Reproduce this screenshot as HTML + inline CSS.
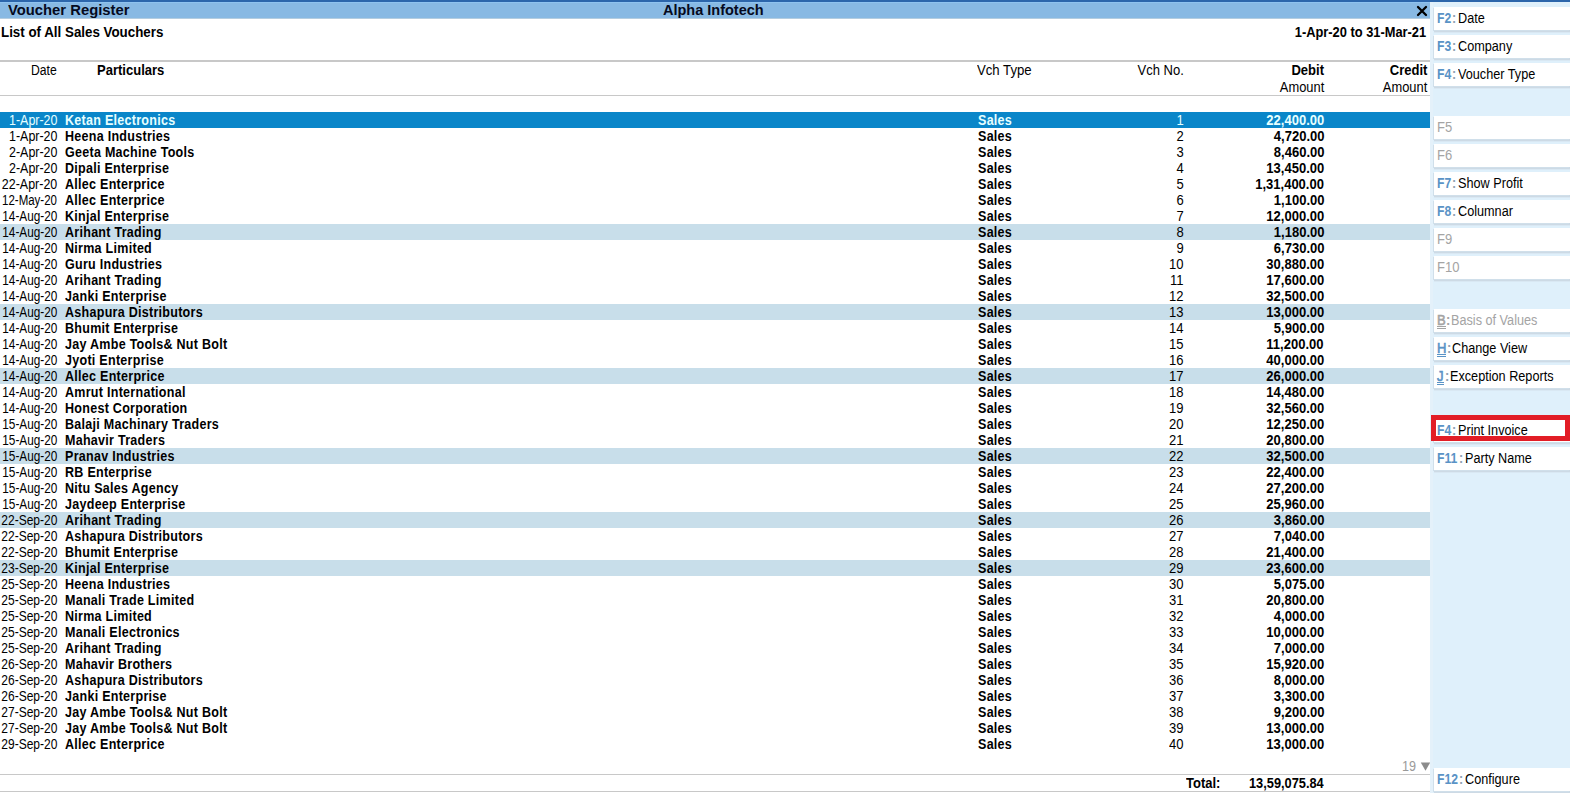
<!DOCTYPE html><html><head><meta charset="utf-8"><title>Voucher Register</title><style>
*{margin:0;padding:0;box-sizing:border-box}
html,body{width:1570px;height:793px;overflow:hidden;background:#fff}
body{position:relative;font-family:"Liberation Sans",sans-serif;font-size:13px;color:#000}
.a{position:absolute;white-space:nowrap;line-height:16px}
.b{font-weight:bold}
.r{text-align:right}
.n{font-size:13.5px}
#topstrip{position:absolute;left:0;top:0;width:1570px;height:2px;background:#2c66ab}
#title{position:absolute;left:0;top:2px;width:1430px;height:16px;background:#88b9e3;border-top:1px solid #8fc3ef}
#title2{position:absolute;left:0;top:18px;width:1430px;height:1px;background:#b4cde0}
#panel{position:absolute;left:1430px;top:2px;width:140px;height:791px;background:#dff0fb}
#panel .strip{position:absolute;left:0;top:0;width:3px;height:791px;background:#e4f1fa}
.btn{position:absolute;left:1434px;width:136px;height:23px;background:#fff;box-shadow:-1px 1px 0 #d0dfea,0 2px 0 #cddae5,0 3px 0 #d9e8f3}
.btn .t{position:absolute;left:3px;top:4px;line-height:16px;white-space:nowrap;font-size:13px}
.btn .k{color:#5f97c8;font-weight:bold}
.btn.dis .t{color:#a6a6a6}
.lb{margin-left:1.5px}
.row{position:absolute;left:0;width:1430px;height:16px}
.sel{background:#0a86c9;color:#e6ffff}
.lt{background:#c8deea}
.hl{position:absolute;left:0;width:1430px;background:#c4c4c4}
</style></head><body>
<div id="topstrip"></div><div id="title"></div><div id="title2"></div>
<div style="position:absolute;white-space:nowrap;top:2px;font-size:14px;line-height:16px;left:7.5px;font-weight:bold;transform:scaleX(1.057);transform-origin:0 0;color:#050a20;">Voucher Register</div>
<div style="position:absolute;white-space:nowrap;top:2px;font-size:14px;line-height:16px;left:662.5px;font-weight:bold;transform:scaleX(1.035);transform-origin:0 0;color:#050a20;">Alpha Infotech</div>
<svg style="position:absolute;left:1416px;top:5px" width="12" height="12" viewBox="0 0 12 12"><path d="M2 2L10 10M10 2L2 10" stroke="#000" stroke-width="2.3" stroke-linecap="round"/></svg>
<div style="position:absolute;white-space:nowrap;top:24px;font-size:14px;line-height:16px;left:1.2px;font-weight:bold;transform:scaleX(0.953);transform-origin:0 0;">List of All Sales Vouchers</div>
<div style="position:absolute;white-space:nowrap;top:24px;font-size:14px;line-height:16px;right:143.4000000000001px;font-weight:bold;transform:scaleX(0.918);transform-origin:100% 0;">1-Apr-20 to 31-Mar-21</div>
<div class="hl" style="top:60px;height:2px;background:#c8c8c8"></div>
<div class="hl" style="top:95px;height:1px;background:#c8c8c8"></div>
<div style="position:absolute;white-space:nowrap;top:62px;font-size:14px;line-height:16px;left:31px;transform:scaleX(0.87);transform-origin:0 0;">Date</div>
<div style="position:absolute;white-space:nowrap;top:62px;font-size:14px;line-height:16px;left:97px;font-weight:bold;transform:scaleX(0.93);transform-origin:0 0;">Particulars</div>
<div style="position:absolute;white-space:nowrap;top:62px;font-size:14px;line-height:16px;left:977px;transform:scaleX(0.94);transform-origin:0 0;">Vch Type</div>
<div style="position:absolute;white-space:nowrap;top:62px;font-size:14px;line-height:16px;right:386px;transform:scaleX(0.93);transform-origin:100% 0;">Vch No.</div>
<div style="position:absolute;white-space:nowrap;top:62px;font-size:14px;line-height:16px;right:246px;font-weight:bold;transform:scaleX(0.93);transform-origin:100% 0;">Debit</div>
<div style="position:absolute;white-space:nowrap;top:79px;font-size:14px;line-height:16px;right:246px;transform:scaleX(0.92);transform-origin:100% 0;">Amount</div>
<div style="position:absolute;white-space:nowrap;top:62px;font-size:14px;line-height:16px;right:143px;font-weight:bold;transform:scaleX(0.93);transform-origin:100% 0;">Credit</div>
<div style="position:absolute;white-space:nowrap;top:79px;font-size:14px;line-height:16px;right:143px;transform:scaleX(0.92);transform-origin:100% 0;">Amount</div>
<div class="row sel" style="top:112px"></div>
<div style="position:absolute;white-space:nowrap;top:112px;font-size:14px;line-height:16px;right:1513px;transform:scaleX(0.89);transform-origin:100% 0;color:#e6ffff;">1-Apr-20</div>
<div style="position:absolute;white-space:nowrap;top:112px;font-size:14px;line-height:16px;left:65px;font-weight:bold;transform:scaleX(0.895);transform-origin:0 0;color:#e6ffff;letter-spacing:0.3px;">Ketan Electronics</div>
<div style="position:absolute;white-space:nowrap;top:112px;font-size:14px;line-height:16px;left:978px;font-weight:bold;transform:scaleX(0.895);transform-origin:0 0;color:#e6ffff;letter-spacing:0.3px;">Sales</div>
<div style="position:absolute;white-space:nowrap;top:112px;font-size:14px;line-height:16px;right:386px;transform:scaleX(0.93);transform-origin:100% 0;color:#e6ffff;">1</div>
<div style="position:absolute;white-space:nowrap;top:112px;font-size:14px;line-height:16px;right:246px;font-weight:bold;transform:scaleX(0.93);transform-origin:100% 0;color:#e6ffff;">22,400.00</div>
<div class="row" style="top:128px"></div>
<div style="position:absolute;white-space:nowrap;top:128px;font-size:14px;line-height:16px;right:1513px;transform:scaleX(0.89);transform-origin:100% 0;">1-Apr-20</div>
<div style="position:absolute;white-space:nowrap;top:128px;font-size:14px;line-height:16px;left:65px;font-weight:bold;transform:scaleX(0.895);transform-origin:0 0;letter-spacing:0.3px;">Heena Industries</div>
<div style="position:absolute;white-space:nowrap;top:128px;font-size:14px;line-height:16px;left:978px;font-weight:bold;transform:scaleX(0.895);transform-origin:0 0;letter-spacing:0.3px;">Sales</div>
<div style="position:absolute;white-space:nowrap;top:128px;font-size:14px;line-height:16px;right:386px;transform:scaleX(0.93);transform-origin:100% 0;">2</div>
<div style="position:absolute;white-space:nowrap;top:128px;font-size:14px;line-height:16px;right:246px;font-weight:bold;transform:scaleX(0.93);transform-origin:100% 0;">4,720.00</div>
<div class="row" style="top:144px"></div>
<div style="position:absolute;white-space:nowrap;top:144px;font-size:14px;line-height:16px;right:1513px;transform:scaleX(0.89);transform-origin:100% 0;">2-Apr-20</div>
<div style="position:absolute;white-space:nowrap;top:144px;font-size:14px;line-height:16px;left:65px;font-weight:bold;transform:scaleX(0.895);transform-origin:0 0;letter-spacing:0.3px;">Geeta Machine Tools</div>
<div style="position:absolute;white-space:nowrap;top:144px;font-size:14px;line-height:16px;left:978px;font-weight:bold;transform:scaleX(0.895);transform-origin:0 0;letter-spacing:0.3px;">Sales</div>
<div style="position:absolute;white-space:nowrap;top:144px;font-size:14px;line-height:16px;right:386px;transform:scaleX(0.93);transform-origin:100% 0;">3</div>
<div style="position:absolute;white-space:nowrap;top:144px;font-size:14px;line-height:16px;right:246px;font-weight:bold;transform:scaleX(0.93);transform-origin:100% 0;">8,460.00</div>
<div class="row" style="top:160px"></div>
<div style="position:absolute;white-space:nowrap;top:160px;font-size:14px;line-height:16px;right:1513px;transform:scaleX(0.89);transform-origin:100% 0;">2-Apr-20</div>
<div style="position:absolute;white-space:nowrap;top:160px;font-size:14px;line-height:16px;left:65px;font-weight:bold;transform:scaleX(0.895);transform-origin:0 0;letter-spacing:0.3px;">Dipali Enterprise</div>
<div style="position:absolute;white-space:nowrap;top:160px;font-size:14px;line-height:16px;left:978px;font-weight:bold;transform:scaleX(0.895);transform-origin:0 0;letter-spacing:0.3px;">Sales</div>
<div style="position:absolute;white-space:nowrap;top:160px;font-size:14px;line-height:16px;right:386px;transform:scaleX(0.93);transform-origin:100% 0;">4</div>
<div style="position:absolute;white-space:nowrap;top:160px;font-size:14px;line-height:16px;right:246px;font-weight:bold;transform:scaleX(0.93);transform-origin:100% 0;">13,450.00</div>
<div class="row" style="top:176px"></div>
<div style="position:absolute;white-space:nowrap;top:176px;font-size:14px;line-height:16px;right:1513px;transform:scaleX(0.89);transform-origin:100% 0;">22-Apr-20</div>
<div style="position:absolute;white-space:nowrap;top:176px;font-size:14px;line-height:16px;left:65px;font-weight:bold;transform:scaleX(0.895);transform-origin:0 0;letter-spacing:0.3px;">Allec Enterprice</div>
<div style="position:absolute;white-space:nowrap;top:176px;font-size:14px;line-height:16px;left:978px;font-weight:bold;transform:scaleX(0.895);transform-origin:0 0;letter-spacing:0.3px;">Sales</div>
<div style="position:absolute;white-space:nowrap;top:176px;font-size:14px;line-height:16px;right:386px;transform:scaleX(0.93);transform-origin:100% 0;">5</div>
<div style="position:absolute;white-space:nowrap;top:176px;font-size:14px;line-height:16px;right:246px;font-weight:bold;transform:scaleX(0.93);transform-origin:100% 0;">1,31,400.00</div>
<div class="row" style="top:192px"></div>
<div style="position:absolute;white-space:nowrap;top:192px;font-size:14px;line-height:16px;right:1513px;transform:scaleX(0.82);transform-origin:100% 0;">12-May-20</div>
<div style="position:absolute;white-space:nowrap;top:192px;font-size:14px;line-height:16px;left:65px;font-weight:bold;transform:scaleX(0.895);transform-origin:0 0;letter-spacing:0.3px;">Allec Enterprice</div>
<div style="position:absolute;white-space:nowrap;top:192px;font-size:14px;line-height:16px;left:978px;font-weight:bold;transform:scaleX(0.895);transform-origin:0 0;letter-spacing:0.3px;">Sales</div>
<div style="position:absolute;white-space:nowrap;top:192px;font-size:14px;line-height:16px;right:386px;transform:scaleX(0.93);transform-origin:100% 0;">6</div>
<div style="position:absolute;white-space:nowrap;top:192px;font-size:14px;line-height:16px;right:246px;font-weight:bold;transform:scaleX(0.93);transform-origin:100% 0;">1,100.00</div>
<div class="row" style="top:208px"></div>
<div style="position:absolute;white-space:nowrap;top:208px;font-size:14px;line-height:16px;right:1513px;transform:scaleX(0.843);transform-origin:100% 0;">14-Aug-20</div>
<div style="position:absolute;white-space:nowrap;top:208px;font-size:14px;line-height:16px;left:65px;font-weight:bold;transform:scaleX(0.895);transform-origin:0 0;letter-spacing:0.3px;">Kinjal Enterprise</div>
<div style="position:absolute;white-space:nowrap;top:208px;font-size:14px;line-height:16px;left:978px;font-weight:bold;transform:scaleX(0.895);transform-origin:0 0;letter-spacing:0.3px;">Sales</div>
<div style="position:absolute;white-space:nowrap;top:208px;font-size:14px;line-height:16px;right:386px;transform:scaleX(0.93);transform-origin:100% 0;">7</div>
<div style="position:absolute;white-space:nowrap;top:208px;font-size:14px;line-height:16px;right:246px;font-weight:bold;transform:scaleX(0.93);transform-origin:100% 0;">12,000.00</div>
<div class="row lt" style="top:224px"></div>
<div style="position:absolute;white-space:nowrap;top:224px;font-size:14px;line-height:16px;right:1513px;transform:scaleX(0.843);transform-origin:100% 0;">14-Aug-20</div>
<div style="position:absolute;white-space:nowrap;top:224px;font-size:14px;line-height:16px;left:65px;font-weight:bold;transform:scaleX(0.895);transform-origin:0 0;letter-spacing:0.3px;">Arihant Trading</div>
<div style="position:absolute;white-space:nowrap;top:224px;font-size:14px;line-height:16px;left:978px;font-weight:bold;transform:scaleX(0.895);transform-origin:0 0;letter-spacing:0.3px;">Sales</div>
<div style="position:absolute;white-space:nowrap;top:224px;font-size:14px;line-height:16px;right:386px;transform:scaleX(0.93);transform-origin:100% 0;">8</div>
<div style="position:absolute;white-space:nowrap;top:224px;font-size:14px;line-height:16px;right:246px;font-weight:bold;transform:scaleX(0.93);transform-origin:100% 0;">1,180.00</div>
<div class="row" style="top:240px"></div>
<div style="position:absolute;white-space:nowrap;top:240px;font-size:14px;line-height:16px;right:1513px;transform:scaleX(0.843);transform-origin:100% 0;">14-Aug-20</div>
<div style="position:absolute;white-space:nowrap;top:240px;font-size:14px;line-height:16px;left:65px;font-weight:bold;transform:scaleX(0.895);transform-origin:0 0;letter-spacing:0.3px;">Nirma Limited</div>
<div style="position:absolute;white-space:nowrap;top:240px;font-size:14px;line-height:16px;left:978px;font-weight:bold;transform:scaleX(0.895);transform-origin:0 0;letter-spacing:0.3px;">Sales</div>
<div style="position:absolute;white-space:nowrap;top:240px;font-size:14px;line-height:16px;right:386px;transform:scaleX(0.93);transform-origin:100% 0;">9</div>
<div style="position:absolute;white-space:nowrap;top:240px;font-size:14px;line-height:16px;right:246px;font-weight:bold;transform:scaleX(0.93);transform-origin:100% 0;">6,730.00</div>
<div class="row" style="top:256px"></div>
<div style="position:absolute;white-space:nowrap;top:256px;font-size:14px;line-height:16px;right:1513px;transform:scaleX(0.843);transform-origin:100% 0;">14-Aug-20</div>
<div style="position:absolute;white-space:nowrap;top:256px;font-size:14px;line-height:16px;left:65px;font-weight:bold;transform:scaleX(0.895);transform-origin:0 0;letter-spacing:0.3px;">Guru Industries</div>
<div style="position:absolute;white-space:nowrap;top:256px;font-size:14px;line-height:16px;left:978px;font-weight:bold;transform:scaleX(0.895);transform-origin:0 0;letter-spacing:0.3px;">Sales</div>
<div style="position:absolute;white-space:nowrap;top:256px;font-size:14px;line-height:16px;right:386px;transform:scaleX(0.93);transform-origin:100% 0;">10</div>
<div style="position:absolute;white-space:nowrap;top:256px;font-size:14px;line-height:16px;right:246px;font-weight:bold;transform:scaleX(0.93);transform-origin:100% 0;">30,880.00</div>
<div class="row" style="top:272px"></div>
<div style="position:absolute;white-space:nowrap;top:272px;font-size:14px;line-height:16px;right:1513px;transform:scaleX(0.843);transform-origin:100% 0;">14-Aug-20</div>
<div style="position:absolute;white-space:nowrap;top:272px;font-size:14px;line-height:16px;left:65px;font-weight:bold;transform:scaleX(0.895);transform-origin:0 0;letter-spacing:0.3px;">Arihant Trading</div>
<div style="position:absolute;white-space:nowrap;top:272px;font-size:14px;line-height:16px;left:978px;font-weight:bold;transform:scaleX(0.895);transform-origin:0 0;letter-spacing:0.3px;">Sales</div>
<div style="position:absolute;white-space:nowrap;top:272px;font-size:14px;line-height:16px;right:386px;transform:scaleX(0.93);transform-origin:100% 0;">11</div>
<div style="position:absolute;white-space:nowrap;top:272px;font-size:14px;line-height:16px;right:246px;font-weight:bold;transform:scaleX(0.93);transform-origin:100% 0;">17,600.00</div>
<div class="row" style="top:288px"></div>
<div style="position:absolute;white-space:nowrap;top:288px;font-size:14px;line-height:16px;right:1513px;transform:scaleX(0.843);transform-origin:100% 0;">14-Aug-20</div>
<div style="position:absolute;white-space:nowrap;top:288px;font-size:14px;line-height:16px;left:65px;font-weight:bold;transform:scaleX(0.895);transform-origin:0 0;letter-spacing:0.3px;">Janki Enterprise</div>
<div style="position:absolute;white-space:nowrap;top:288px;font-size:14px;line-height:16px;left:978px;font-weight:bold;transform:scaleX(0.895);transform-origin:0 0;letter-spacing:0.3px;">Sales</div>
<div style="position:absolute;white-space:nowrap;top:288px;font-size:14px;line-height:16px;right:386px;transform:scaleX(0.93);transform-origin:100% 0;">12</div>
<div style="position:absolute;white-space:nowrap;top:288px;font-size:14px;line-height:16px;right:246px;font-weight:bold;transform:scaleX(0.93);transform-origin:100% 0;">32,500.00</div>
<div class="row lt" style="top:304px"></div>
<div style="position:absolute;white-space:nowrap;top:304px;font-size:14px;line-height:16px;right:1513px;transform:scaleX(0.843);transform-origin:100% 0;">14-Aug-20</div>
<div style="position:absolute;white-space:nowrap;top:304px;font-size:14px;line-height:16px;left:65px;font-weight:bold;transform:scaleX(0.895);transform-origin:0 0;letter-spacing:0.3px;">Ashapura Distributors</div>
<div style="position:absolute;white-space:nowrap;top:304px;font-size:14px;line-height:16px;left:978px;font-weight:bold;transform:scaleX(0.895);transform-origin:0 0;letter-spacing:0.3px;">Sales</div>
<div style="position:absolute;white-space:nowrap;top:304px;font-size:14px;line-height:16px;right:386px;transform:scaleX(0.93);transform-origin:100% 0;">13</div>
<div style="position:absolute;white-space:nowrap;top:304px;font-size:14px;line-height:16px;right:246px;font-weight:bold;transform:scaleX(0.93);transform-origin:100% 0;">13,000.00</div>
<div class="row" style="top:320px"></div>
<div style="position:absolute;white-space:nowrap;top:320px;font-size:14px;line-height:16px;right:1513px;transform:scaleX(0.843);transform-origin:100% 0;">14-Aug-20</div>
<div style="position:absolute;white-space:nowrap;top:320px;font-size:14px;line-height:16px;left:65px;font-weight:bold;transform:scaleX(0.895);transform-origin:0 0;letter-spacing:0.3px;">Bhumit Enterprise</div>
<div style="position:absolute;white-space:nowrap;top:320px;font-size:14px;line-height:16px;left:978px;font-weight:bold;transform:scaleX(0.895);transform-origin:0 0;letter-spacing:0.3px;">Sales</div>
<div style="position:absolute;white-space:nowrap;top:320px;font-size:14px;line-height:16px;right:386px;transform:scaleX(0.93);transform-origin:100% 0;">14</div>
<div style="position:absolute;white-space:nowrap;top:320px;font-size:14px;line-height:16px;right:246px;font-weight:bold;transform:scaleX(0.93);transform-origin:100% 0;">5,900.00</div>
<div class="row" style="top:336px"></div>
<div style="position:absolute;white-space:nowrap;top:336px;font-size:14px;line-height:16px;right:1513px;transform:scaleX(0.843);transform-origin:100% 0;">14-Aug-20</div>
<div style="position:absolute;white-space:nowrap;top:336px;font-size:14px;line-height:16px;left:65px;font-weight:bold;transform:scaleX(0.895);transform-origin:0 0;letter-spacing:0.3px;">Jay Ambe Tools&amp; Nut Bolt</div>
<div style="position:absolute;white-space:nowrap;top:336px;font-size:14px;line-height:16px;left:978px;font-weight:bold;transform:scaleX(0.895);transform-origin:0 0;letter-spacing:0.3px;">Sales</div>
<div style="position:absolute;white-space:nowrap;top:336px;font-size:14px;line-height:16px;right:386px;transform:scaleX(0.93);transform-origin:100% 0;">15</div>
<div style="position:absolute;white-space:nowrap;top:336px;font-size:14px;line-height:16px;right:246px;font-weight:bold;transform:scaleX(0.93);transform-origin:100% 0;">11,200.00</div>
<div class="row" style="top:352px"></div>
<div style="position:absolute;white-space:nowrap;top:352px;font-size:14px;line-height:16px;right:1513px;transform:scaleX(0.843);transform-origin:100% 0;">14-Aug-20</div>
<div style="position:absolute;white-space:nowrap;top:352px;font-size:14px;line-height:16px;left:65px;font-weight:bold;transform:scaleX(0.895);transform-origin:0 0;letter-spacing:0.3px;">Jyoti Enterprise</div>
<div style="position:absolute;white-space:nowrap;top:352px;font-size:14px;line-height:16px;left:978px;font-weight:bold;transform:scaleX(0.895);transform-origin:0 0;letter-spacing:0.3px;">Sales</div>
<div style="position:absolute;white-space:nowrap;top:352px;font-size:14px;line-height:16px;right:386px;transform:scaleX(0.93);transform-origin:100% 0;">16</div>
<div style="position:absolute;white-space:nowrap;top:352px;font-size:14px;line-height:16px;right:246px;font-weight:bold;transform:scaleX(0.93);transform-origin:100% 0;">40,000.00</div>
<div class="row lt" style="top:368px"></div>
<div style="position:absolute;white-space:nowrap;top:368px;font-size:14px;line-height:16px;right:1513px;transform:scaleX(0.843);transform-origin:100% 0;">14-Aug-20</div>
<div style="position:absolute;white-space:nowrap;top:368px;font-size:14px;line-height:16px;left:65px;font-weight:bold;transform:scaleX(0.895);transform-origin:0 0;letter-spacing:0.3px;">Allec Enterprice</div>
<div style="position:absolute;white-space:nowrap;top:368px;font-size:14px;line-height:16px;left:978px;font-weight:bold;transform:scaleX(0.895);transform-origin:0 0;letter-spacing:0.3px;">Sales</div>
<div style="position:absolute;white-space:nowrap;top:368px;font-size:14px;line-height:16px;right:386px;transform:scaleX(0.93);transform-origin:100% 0;">17</div>
<div style="position:absolute;white-space:nowrap;top:368px;font-size:14px;line-height:16px;right:246px;font-weight:bold;transform:scaleX(0.93);transform-origin:100% 0;">26,000.00</div>
<div class="row" style="top:384px"></div>
<div style="position:absolute;white-space:nowrap;top:384px;font-size:14px;line-height:16px;right:1513px;transform:scaleX(0.843);transform-origin:100% 0;">14-Aug-20</div>
<div style="position:absolute;white-space:nowrap;top:384px;font-size:14px;line-height:16px;left:65px;font-weight:bold;transform:scaleX(0.895);transform-origin:0 0;letter-spacing:0.3px;">Amrut International</div>
<div style="position:absolute;white-space:nowrap;top:384px;font-size:14px;line-height:16px;left:978px;font-weight:bold;transform:scaleX(0.895);transform-origin:0 0;letter-spacing:0.3px;">Sales</div>
<div style="position:absolute;white-space:nowrap;top:384px;font-size:14px;line-height:16px;right:386px;transform:scaleX(0.93);transform-origin:100% 0;">18</div>
<div style="position:absolute;white-space:nowrap;top:384px;font-size:14px;line-height:16px;right:246px;font-weight:bold;transform:scaleX(0.93);transform-origin:100% 0;">14,480.00</div>
<div class="row" style="top:400px"></div>
<div style="position:absolute;white-space:nowrap;top:400px;font-size:14px;line-height:16px;right:1513px;transform:scaleX(0.843);transform-origin:100% 0;">14-Aug-20</div>
<div style="position:absolute;white-space:nowrap;top:400px;font-size:14px;line-height:16px;left:65px;font-weight:bold;transform:scaleX(0.895);transform-origin:0 0;letter-spacing:0.3px;">Honest Corporation</div>
<div style="position:absolute;white-space:nowrap;top:400px;font-size:14px;line-height:16px;left:978px;font-weight:bold;transform:scaleX(0.895);transform-origin:0 0;letter-spacing:0.3px;">Sales</div>
<div style="position:absolute;white-space:nowrap;top:400px;font-size:14px;line-height:16px;right:386px;transform:scaleX(0.93);transform-origin:100% 0;">19</div>
<div style="position:absolute;white-space:nowrap;top:400px;font-size:14px;line-height:16px;right:246px;font-weight:bold;transform:scaleX(0.93);transform-origin:100% 0;">32,560.00</div>
<div class="row" style="top:416px"></div>
<div style="position:absolute;white-space:nowrap;top:416px;font-size:14px;line-height:16px;right:1513px;transform:scaleX(0.843);transform-origin:100% 0;">15-Aug-20</div>
<div style="position:absolute;white-space:nowrap;top:416px;font-size:14px;line-height:16px;left:65px;font-weight:bold;transform:scaleX(0.895);transform-origin:0 0;letter-spacing:0.3px;">Balaji Machinary Traders</div>
<div style="position:absolute;white-space:nowrap;top:416px;font-size:14px;line-height:16px;left:978px;font-weight:bold;transform:scaleX(0.895);transform-origin:0 0;letter-spacing:0.3px;">Sales</div>
<div style="position:absolute;white-space:nowrap;top:416px;font-size:14px;line-height:16px;right:386px;transform:scaleX(0.93);transform-origin:100% 0;">20</div>
<div style="position:absolute;white-space:nowrap;top:416px;font-size:14px;line-height:16px;right:246px;font-weight:bold;transform:scaleX(0.93);transform-origin:100% 0;">12,250.00</div>
<div class="row" style="top:432px"></div>
<div style="position:absolute;white-space:nowrap;top:432px;font-size:14px;line-height:16px;right:1513px;transform:scaleX(0.843);transform-origin:100% 0;">15-Aug-20</div>
<div style="position:absolute;white-space:nowrap;top:432px;font-size:14px;line-height:16px;left:65px;font-weight:bold;transform:scaleX(0.895);transform-origin:0 0;letter-spacing:0.3px;">Mahavir Traders</div>
<div style="position:absolute;white-space:nowrap;top:432px;font-size:14px;line-height:16px;left:978px;font-weight:bold;transform:scaleX(0.895);transform-origin:0 0;letter-spacing:0.3px;">Sales</div>
<div style="position:absolute;white-space:nowrap;top:432px;font-size:14px;line-height:16px;right:386px;transform:scaleX(0.93);transform-origin:100% 0;">21</div>
<div style="position:absolute;white-space:nowrap;top:432px;font-size:14px;line-height:16px;right:246px;font-weight:bold;transform:scaleX(0.93);transform-origin:100% 0;">20,800.00</div>
<div class="row lt" style="top:448px"></div>
<div style="position:absolute;white-space:nowrap;top:448px;font-size:14px;line-height:16px;right:1513px;transform:scaleX(0.843);transform-origin:100% 0;">15-Aug-20</div>
<div style="position:absolute;white-space:nowrap;top:448px;font-size:14px;line-height:16px;left:65px;font-weight:bold;transform:scaleX(0.895);transform-origin:0 0;letter-spacing:0.3px;">Pranav Industries</div>
<div style="position:absolute;white-space:nowrap;top:448px;font-size:14px;line-height:16px;left:978px;font-weight:bold;transform:scaleX(0.895);transform-origin:0 0;letter-spacing:0.3px;">Sales</div>
<div style="position:absolute;white-space:nowrap;top:448px;font-size:14px;line-height:16px;right:386px;transform:scaleX(0.93);transform-origin:100% 0;">22</div>
<div style="position:absolute;white-space:nowrap;top:448px;font-size:14px;line-height:16px;right:246px;font-weight:bold;transform:scaleX(0.93);transform-origin:100% 0;">32,500.00</div>
<div class="row" style="top:464px"></div>
<div style="position:absolute;white-space:nowrap;top:464px;font-size:14px;line-height:16px;right:1513px;transform:scaleX(0.843);transform-origin:100% 0;">15-Aug-20</div>
<div style="position:absolute;white-space:nowrap;top:464px;font-size:14px;line-height:16px;left:65px;font-weight:bold;transform:scaleX(0.895);transform-origin:0 0;letter-spacing:0.3px;">RB Enterprise</div>
<div style="position:absolute;white-space:nowrap;top:464px;font-size:14px;line-height:16px;left:978px;font-weight:bold;transform:scaleX(0.895);transform-origin:0 0;letter-spacing:0.3px;">Sales</div>
<div style="position:absolute;white-space:nowrap;top:464px;font-size:14px;line-height:16px;right:386px;transform:scaleX(0.93);transform-origin:100% 0;">23</div>
<div style="position:absolute;white-space:nowrap;top:464px;font-size:14px;line-height:16px;right:246px;font-weight:bold;transform:scaleX(0.93);transform-origin:100% 0;">22,400.00</div>
<div class="row" style="top:480px"></div>
<div style="position:absolute;white-space:nowrap;top:480px;font-size:14px;line-height:16px;right:1513px;transform:scaleX(0.843);transform-origin:100% 0;">15-Aug-20</div>
<div style="position:absolute;white-space:nowrap;top:480px;font-size:14px;line-height:16px;left:65px;font-weight:bold;transform:scaleX(0.895);transform-origin:0 0;letter-spacing:0.3px;">Nitu Sales Agency</div>
<div style="position:absolute;white-space:nowrap;top:480px;font-size:14px;line-height:16px;left:978px;font-weight:bold;transform:scaleX(0.895);transform-origin:0 0;letter-spacing:0.3px;">Sales</div>
<div style="position:absolute;white-space:nowrap;top:480px;font-size:14px;line-height:16px;right:386px;transform:scaleX(0.93);transform-origin:100% 0;">24</div>
<div style="position:absolute;white-space:nowrap;top:480px;font-size:14px;line-height:16px;right:246px;font-weight:bold;transform:scaleX(0.93);transform-origin:100% 0;">27,200.00</div>
<div class="row" style="top:496px"></div>
<div style="position:absolute;white-space:nowrap;top:496px;font-size:14px;line-height:16px;right:1513px;transform:scaleX(0.843);transform-origin:100% 0;">15-Aug-20</div>
<div style="position:absolute;white-space:nowrap;top:496px;font-size:14px;line-height:16px;left:65px;font-weight:bold;transform:scaleX(0.895);transform-origin:0 0;letter-spacing:0.3px;">Jaydeep Enterprise</div>
<div style="position:absolute;white-space:nowrap;top:496px;font-size:14px;line-height:16px;left:978px;font-weight:bold;transform:scaleX(0.895);transform-origin:0 0;letter-spacing:0.3px;">Sales</div>
<div style="position:absolute;white-space:nowrap;top:496px;font-size:14px;line-height:16px;right:386px;transform:scaleX(0.93);transform-origin:100% 0;">25</div>
<div style="position:absolute;white-space:nowrap;top:496px;font-size:14px;line-height:16px;right:246px;font-weight:bold;transform:scaleX(0.93);transform-origin:100% 0;">25,960.00</div>
<div class="row lt" style="top:512px"></div>
<div style="position:absolute;white-space:nowrap;top:512px;font-size:14px;line-height:16px;right:1513px;transform:scaleX(0.858);transform-origin:100% 0;">22-Sep-20</div>
<div style="position:absolute;white-space:nowrap;top:512px;font-size:14px;line-height:16px;left:65px;font-weight:bold;transform:scaleX(0.895);transform-origin:0 0;letter-spacing:0.3px;">Arihant Trading</div>
<div style="position:absolute;white-space:nowrap;top:512px;font-size:14px;line-height:16px;left:978px;font-weight:bold;transform:scaleX(0.895);transform-origin:0 0;letter-spacing:0.3px;">Sales</div>
<div style="position:absolute;white-space:nowrap;top:512px;font-size:14px;line-height:16px;right:386px;transform:scaleX(0.93);transform-origin:100% 0;">26</div>
<div style="position:absolute;white-space:nowrap;top:512px;font-size:14px;line-height:16px;right:246px;font-weight:bold;transform:scaleX(0.93);transform-origin:100% 0;">3,860.00</div>
<div class="row" style="top:528px"></div>
<div style="position:absolute;white-space:nowrap;top:528px;font-size:14px;line-height:16px;right:1513px;transform:scaleX(0.858);transform-origin:100% 0;">22-Sep-20</div>
<div style="position:absolute;white-space:nowrap;top:528px;font-size:14px;line-height:16px;left:65px;font-weight:bold;transform:scaleX(0.895);transform-origin:0 0;letter-spacing:0.3px;">Ashapura Distributors</div>
<div style="position:absolute;white-space:nowrap;top:528px;font-size:14px;line-height:16px;left:978px;font-weight:bold;transform:scaleX(0.895);transform-origin:0 0;letter-spacing:0.3px;">Sales</div>
<div style="position:absolute;white-space:nowrap;top:528px;font-size:14px;line-height:16px;right:386px;transform:scaleX(0.93);transform-origin:100% 0;">27</div>
<div style="position:absolute;white-space:nowrap;top:528px;font-size:14px;line-height:16px;right:246px;font-weight:bold;transform:scaleX(0.93);transform-origin:100% 0;">7,040.00</div>
<div class="row" style="top:544px"></div>
<div style="position:absolute;white-space:nowrap;top:544px;font-size:14px;line-height:16px;right:1513px;transform:scaleX(0.858);transform-origin:100% 0;">22-Sep-20</div>
<div style="position:absolute;white-space:nowrap;top:544px;font-size:14px;line-height:16px;left:65px;font-weight:bold;transform:scaleX(0.895);transform-origin:0 0;letter-spacing:0.3px;">Bhumit Enterprise</div>
<div style="position:absolute;white-space:nowrap;top:544px;font-size:14px;line-height:16px;left:978px;font-weight:bold;transform:scaleX(0.895);transform-origin:0 0;letter-spacing:0.3px;">Sales</div>
<div style="position:absolute;white-space:nowrap;top:544px;font-size:14px;line-height:16px;right:386px;transform:scaleX(0.93);transform-origin:100% 0;">28</div>
<div style="position:absolute;white-space:nowrap;top:544px;font-size:14px;line-height:16px;right:246px;font-weight:bold;transform:scaleX(0.93);transform-origin:100% 0;">21,400.00</div>
<div class="row lt" style="top:560px"></div>
<div style="position:absolute;white-space:nowrap;top:560px;font-size:14px;line-height:16px;right:1513px;transform:scaleX(0.858);transform-origin:100% 0;">23-Sep-20</div>
<div style="position:absolute;white-space:nowrap;top:560px;font-size:14px;line-height:16px;left:65px;font-weight:bold;transform:scaleX(0.895);transform-origin:0 0;letter-spacing:0.3px;">Kinjal Enterprise</div>
<div style="position:absolute;white-space:nowrap;top:560px;font-size:14px;line-height:16px;left:978px;font-weight:bold;transform:scaleX(0.895);transform-origin:0 0;letter-spacing:0.3px;">Sales</div>
<div style="position:absolute;white-space:nowrap;top:560px;font-size:14px;line-height:16px;right:386px;transform:scaleX(0.93);transform-origin:100% 0;">29</div>
<div style="position:absolute;white-space:nowrap;top:560px;font-size:14px;line-height:16px;right:246px;font-weight:bold;transform:scaleX(0.93);transform-origin:100% 0;">23,600.00</div>
<div class="row" style="top:576px"></div>
<div style="position:absolute;white-space:nowrap;top:576px;font-size:14px;line-height:16px;right:1513px;transform:scaleX(0.858);transform-origin:100% 0;">25-Sep-20</div>
<div style="position:absolute;white-space:nowrap;top:576px;font-size:14px;line-height:16px;left:65px;font-weight:bold;transform:scaleX(0.895);transform-origin:0 0;letter-spacing:0.3px;">Heena Industries</div>
<div style="position:absolute;white-space:nowrap;top:576px;font-size:14px;line-height:16px;left:978px;font-weight:bold;transform:scaleX(0.895);transform-origin:0 0;letter-spacing:0.3px;">Sales</div>
<div style="position:absolute;white-space:nowrap;top:576px;font-size:14px;line-height:16px;right:386px;transform:scaleX(0.93);transform-origin:100% 0;">30</div>
<div style="position:absolute;white-space:nowrap;top:576px;font-size:14px;line-height:16px;right:246px;font-weight:bold;transform:scaleX(0.93);transform-origin:100% 0;">5,075.00</div>
<div class="row" style="top:592px"></div>
<div style="position:absolute;white-space:nowrap;top:592px;font-size:14px;line-height:16px;right:1513px;transform:scaleX(0.858);transform-origin:100% 0;">25-Sep-20</div>
<div style="position:absolute;white-space:nowrap;top:592px;font-size:14px;line-height:16px;left:65px;font-weight:bold;transform:scaleX(0.895);transform-origin:0 0;letter-spacing:0.3px;">Manali Trade Limited</div>
<div style="position:absolute;white-space:nowrap;top:592px;font-size:14px;line-height:16px;left:978px;font-weight:bold;transform:scaleX(0.895);transform-origin:0 0;letter-spacing:0.3px;">Sales</div>
<div style="position:absolute;white-space:nowrap;top:592px;font-size:14px;line-height:16px;right:386px;transform:scaleX(0.93);transform-origin:100% 0;">31</div>
<div style="position:absolute;white-space:nowrap;top:592px;font-size:14px;line-height:16px;right:246px;font-weight:bold;transform:scaleX(0.93);transform-origin:100% 0;">20,800.00</div>
<div class="row" style="top:608px"></div>
<div style="position:absolute;white-space:nowrap;top:608px;font-size:14px;line-height:16px;right:1513px;transform:scaleX(0.858);transform-origin:100% 0;">25-Sep-20</div>
<div style="position:absolute;white-space:nowrap;top:608px;font-size:14px;line-height:16px;left:65px;font-weight:bold;transform:scaleX(0.895);transform-origin:0 0;letter-spacing:0.3px;">Nirma Limited</div>
<div style="position:absolute;white-space:nowrap;top:608px;font-size:14px;line-height:16px;left:978px;font-weight:bold;transform:scaleX(0.895);transform-origin:0 0;letter-spacing:0.3px;">Sales</div>
<div style="position:absolute;white-space:nowrap;top:608px;font-size:14px;line-height:16px;right:386px;transform:scaleX(0.93);transform-origin:100% 0;">32</div>
<div style="position:absolute;white-space:nowrap;top:608px;font-size:14px;line-height:16px;right:246px;font-weight:bold;transform:scaleX(0.93);transform-origin:100% 0;">4,000.00</div>
<div class="row" style="top:624px"></div>
<div style="position:absolute;white-space:nowrap;top:624px;font-size:14px;line-height:16px;right:1513px;transform:scaleX(0.858);transform-origin:100% 0;">25-Sep-20</div>
<div style="position:absolute;white-space:nowrap;top:624px;font-size:14px;line-height:16px;left:65px;font-weight:bold;transform:scaleX(0.895);transform-origin:0 0;letter-spacing:0.3px;">Manali Electronics</div>
<div style="position:absolute;white-space:nowrap;top:624px;font-size:14px;line-height:16px;left:978px;font-weight:bold;transform:scaleX(0.895);transform-origin:0 0;letter-spacing:0.3px;">Sales</div>
<div style="position:absolute;white-space:nowrap;top:624px;font-size:14px;line-height:16px;right:386px;transform:scaleX(0.93);transform-origin:100% 0;">33</div>
<div style="position:absolute;white-space:nowrap;top:624px;font-size:14px;line-height:16px;right:246px;font-weight:bold;transform:scaleX(0.93);transform-origin:100% 0;">10,000.00</div>
<div class="row" style="top:640px"></div>
<div style="position:absolute;white-space:nowrap;top:640px;font-size:14px;line-height:16px;right:1513px;transform:scaleX(0.858);transform-origin:100% 0;">25-Sep-20</div>
<div style="position:absolute;white-space:nowrap;top:640px;font-size:14px;line-height:16px;left:65px;font-weight:bold;transform:scaleX(0.895);transform-origin:0 0;letter-spacing:0.3px;">Arihant Trading</div>
<div style="position:absolute;white-space:nowrap;top:640px;font-size:14px;line-height:16px;left:978px;font-weight:bold;transform:scaleX(0.895);transform-origin:0 0;letter-spacing:0.3px;">Sales</div>
<div style="position:absolute;white-space:nowrap;top:640px;font-size:14px;line-height:16px;right:386px;transform:scaleX(0.93);transform-origin:100% 0;">34</div>
<div style="position:absolute;white-space:nowrap;top:640px;font-size:14px;line-height:16px;right:246px;font-weight:bold;transform:scaleX(0.93);transform-origin:100% 0;">7,000.00</div>
<div class="row" style="top:656px"></div>
<div style="position:absolute;white-space:nowrap;top:656px;font-size:14px;line-height:16px;right:1513px;transform:scaleX(0.858);transform-origin:100% 0;">26-Sep-20</div>
<div style="position:absolute;white-space:nowrap;top:656px;font-size:14px;line-height:16px;left:65px;font-weight:bold;transform:scaleX(0.895);transform-origin:0 0;letter-spacing:0.3px;">Mahavir Brothers</div>
<div style="position:absolute;white-space:nowrap;top:656px;font-size:14px;line-height:16px;left:978px;font-weight:bold;transform:scaleX(0.895);transform-origin:0 0;letter-spacing:0.3px;">Sales</div>
<div style="position:absolute;white-space:nowrap;top:656px;font-size:14px;line-height:16px;right:386px;transform:scaleX(0.93);transform-origin:100% 0;">35</div>
<div style="position:absolute;white-space:nowrap;top:656px;font-size:14px;line-height:16px;right:246px;font-weight:bold;transform:scaleX(0.93);transform-origin:100% 0;">15,920.00</div>
<div class="row" style="top:672px"></div>
<div style="position:absolute;white-space:nowrap;top:672px;font-size:14px;line-height:16px;right:1513px;transform:scaleX(0.858);transform-origin:100% 0;">26-Sep-20</div>
<div style="position:absolute;white-space:nowrap;top:672px;font-size:14px;line-height:16px;left:65px;font-weight:bold;transform:scaleX(0.895);transform-origin:0 0;letter-spacing:0.3px;">Ashapura Distributors</div>
<div style="position:absolute;white-space:nowrap;top:672px;font-size:14px;line-height:16px;left:978px;font-weight:bold;transform:scaleX(0.895);transform-origin:0 0;letter-spacing:0.3px;">Sales</div>
<div style="position:absolute;white-space:nowrap;top:672px;font-size:14px;line-height:16px;right:386px;transform:scaleX(0.93);transform-origin:100% 0;">36</div>
<div style="position:absolute;white-space:nowrap;top:672px;font-size:14px;line-height:16px;right:246px;font-weight:bold;transform:scaleX(0.93);transform-origin:100% 0;">8,000.00</div>
<div class="row" style="top:688px"></div>
<div style="position:absolute;white-space:nowrap;top:688px;font-size:14px;line-height:16px;right:1513px;transform:scaleX(0.858);transform-origin:100% 0;">26-Sep-20</div>
<div style="position:absolute;white-space:nowrap;top:688px;font-size:14px;line-height:16px;left:65px;font-weight:bold;transform:scaleX(0.895);transform-origin:0 0;letter-spacing:0.3px;">Janki Enterprise</div>
<div style="position:absolute;white-space:nowrap;top:688px;font-size:14px;line-height:16px;left:978px;font-weight:bold;transform:scaleX(0.895);transform-origin:0 0;letter-spacing:0.3px;">Sales</div>
<div style="position:absolute;white-space:nowrap;top:688px;font-size:14px;line-height:16px;right:386px;transform:scaleX(0.93);transform-origin:100% 0;">37</div>
<div style="position:absolute;white-space:nowrap;top:688px;font-size:14px;line-height:16px;right:246px;font-weight:bold;transform:scaleX(0.93);transform-origin:100% 0;">3,300.00</div>
<div class="row" style="top:704px"></div>
<div style="position:absolute;white-space:nowrap;top:704px;font-size:14px;line-height:16px;right:1513px;transform:scaleX(0.858);transform-origin:100% 0;">27-Sep-20</div>
<div style="position:absolute;white-space:nowrap;top:704px;font-size:14px;line-height:16px;left:65px;font-weight:bold;transform:scaleX(0.895);transform-origin:0 0;letter-spacing:0.3px;">Jay Ambe Tools&amp; Nut Bolt</div>
<div style="position:absolute;white-space:nowrap;top:704px;font-size:14px;line-height:16px;left:978px;font-weight:bold;transform:scaleX(0.895);transform-origin:0 0;letter-spacing:0.3px;">Sales</div>
<div style="position:absolute;white-space:nowrap;top:704px;font-size:14px;line-height:16px;right:386px;transform:scaleX(0.93);transform-origin:100% 0;">38</div>
<div style="position:absolute;white-space:nowrap;top:704px;font-size:14px;line-height:16px;right:246px;font-weight:bold;transform:scaleX(0.93);transform-origin:100% 0;">9,200.00</div>
<div class="row" style="top:720px"></div>
<div style="position:absolute;white-space:nowrap;top:720px;font-size:14px;line-height:16px;right:1513px;transform:scaleX(0.858);transform-origin:100% 0;">27-Sep-20</div>
<div style="position:absolute;white-space:nowrap;top:720px;font-size:14px;line-height:16px;left:65px;font-weight:bold;transform:scaleX(0.895);transform-origin:0 0;letter-spacing:0.3px;">Jay Ambe Tools&amp; Nut Bolt</div>
<div style="position:absolute;white-space:nowrap;top:720px;font-size:14px;line-height:16px;left:978px;font-weight:bold;transform:scaleX(0.895);transform-origin:0 0;letter-spacing:0.3px;">Sales</div>
<div style="position:absolute;white-space:nowrap;top:720px;font-size:14px;line-height:16px;right:386px;transform:scaleX(0.93);transform-origin:100% 0;">39</div>
<div style="position:absolute;white-space:nowrap;top:720px;font-size:14px;line-height:16px;right:246px;font-weight:bold;transform:scaleX(0.93);transform-origin:100% 0;">13,000.00</div>
<div class="row" style="top:736px"></div>
<div style="position:absolute;white-space:nowrap;top:736px;font-size:14px;line-height:16px;right:1513px;transform:scaleX(0.858);transform-origin:100% 0;">29-Sep-20</div>
<div style="position:absolute;white-space:nowrap;top:736px;font-size:14px;line-height:16px;left:65px;font-weight:bold;transform:scaleX(0.895);transform-origin:0 0;letter-spacing:0.3px;">Allec Enterprice</div>
<div style="position:absolute;white-space:nowrap;top:736px;font-size:14px;line-height:16px;left:978px;font-weight:bold;transform:scaleX(0.895);transform-origin:0 0;letter-spacing:0.3px;">Sales</div>
<div style="position:absolute;white-space:nowrap;top:736px;font-size:14px;line-height:16px;right:386px;transform:scaleX(0.93);transform-origin:100% 0;">40</div>
<div style="position:absolute;white-space:nowrap;top:736px;font-size:14px;line-height:16px;right:246px;font-weight:bold;transform:scaleX(0.93);transform-origin:100% 0;">13,000.00</div>
<div style="position:absolute;white-space:nowrap;top:758px;font-size:14px;line-height:16px;left:1401.5px;transform:scaleX(0.9);transform-origin:0 0;color:#9a9a9a;">19</div>
<svg style="position:absolute;left:1420px;top:762px" width="11" height="9" viewBox="0 0 11 9"><path d="M0.8 0.5H10.2L5.5 8.8Z" fill="#8c8c8c"/></svg>
<div class="hl" style="top:774px;height:1px;background:#c8c8c8"></div>
<div class="hl" style="top:791px;height:1px;background:#c8c8c8"></div>
<div style="position:absolute;white-space:nowrap;top:775px;font-size:14px;line-height:16px;left:1185.5px;font-weight:bold;transform:scaleX(0.927);transform-origin:0 0;">Total:</div>
<div style="position:absolute;white-space:nowrap;top:775px;font-size:14px;line-height:16px;right:246px;font-weight:bold;transform:scaleX(0.915);transform-origin:100% 0;">13,59,075.84</div>
<div id="panel"><div class="strip"></div></div>
<div class="btn" style="top:7px"></div>
<div style="position:absolute;white-space:nowrap;top:10px;font-size:14px;line-height:16px;left:1436.8px;font-weight:bold;transform:scaleX(0.87);transform-origin:0 0;color:#5a93c6;">F2</div>
<div style="position:absolute;white-space:nowrap;top:10px;font-size:14px;line-height:16px;left:1451.8px;font-weight:bold;transform:scaleX(0.9);transform-origin:0 0;color:#8fa3b3;">:</div>
<div style="position:absolute;white-space:nowrap;top:10px;font-size:14px;line-height:16px;left:1458.0px;transform:scaleX(0.905);transform-origin:0 0;">Date</div>
<div class="btn" style="top:35px"></div>
<div style="position:absolute;white-space:nowrap;top:38px;font-size:14px;line-height:16px;left:1436.8px;font-weight:bold;transform:scaleX(0.87);transform-origin:0 0;color:#5a93c6;">F3</div>
<div style="position:absolute;white-space:nowrap;top:38px;font-size:14px;line-height:16px;left:1451.8px;font-weight:bold;transform:scaleX(0.9);transform-origin:0 0;color:#8fa3b3;">:</div>
<div style="position:absolute;white-space:nowrap;top:38px;font-size:14px;line-height:16px;left:1458.0px;transform:scaleX(0.905);transform-origin:0 0;">Company</div>
<div class="btn" style="top:63px"></div>
<div style="position:absolute;white-space:nowrap;top:66px;font-size:14px;line-height:16px;left:1436.8px;font-weight:bold;transform:scaleX(0.87);transform-origin:0 0;color:#5a93c6;">F4</div>
<div style="position:absolute;white-space:nowrap;top:66px;font-size:14px;line-height:16px;left:1451.8px;font-weight:bold;transform:scaleX(0.9);transform-origin:0 0;color:#8fa3b3;">:</div>
<div style="position:absolute;white-space:nowrap;top:66px;font-size:14px;line-height:16px;left:1458.0px;transform:scaleX(0.905);transform-origin:0 0;">Voucher Type</div>
<div class="btn" style="top:116px"></div>
<div style="position:absolute;white-space:nowrap;top:119px;font-size:14px;line-height:16px;left:1436.5px;transform:scaleX(0.93);transform-origin:0 0;color:#a4a4a4;">F5</div>
<div class="btn" style="top:144px"></div>
<div style="position:absolute;white-space:nowrap;top:147px;font-size:14px;line-height:16px;left:1436.5px;transform:scaleX(0.93);transform-origin:0 0;color:#a4a4a4;">F6</div>
<div class="btn" style="top:172px"></div>
<div style="position:absolute;white-space:nowrap;top:175px;font-size:14px;line-height:16px;left:1436.8px;font-weight:bold;transform:scaleX(0.87);transform-origin:0 0;color:#5a93c6;">F7</div>
<div style="position:absolute;white-space:nowrap;top:175px;font-size:14px;line-height:16px;left:1451.8px;font-weight:bold;transform:scaleX(0.9);transform-origin:0 0;color:#8fa3b3;">:</div>
<div style="position:absolute;white-space:nowrap;top:175px;font-size:14px;line-height:16px;left:1458.0px;transform:scaleX(0.905);transform-origin:0 0;">Show Profit</div>
<div class="btn" style="top:200px"></div>
<div style="position:absolute;white-space:nowrap;top:203px;font-size:14px;line-height:16px;left:1436.8px;font-weight:bold;transform:scaleX(0.87);transform-origin:0 0;color:#5a93c6;">F8</div>
<div style="position:absolute;white-space:nowrap;top:203px;font-size:14px;line-height:16px;left:1451.8px;font-weight:bold;transform:scaleX(0.9);transform-origin:0 0;color:#8fa3b3;">:</div>
<div style="position:absolute;white-space:nowrap;top:203px;font-size:14px;line-height:16px;left:1458.0px;transform:scaleX(0.905);transform-origin:0 0;">Columnar</div>
<div class="btn" style="top:228px"></div>
<div style="position:absolute;white-space:nowrap;top:231px;font-size:14px;line-height:16px;left:1436.5px;transform:scaleX(0.93);transform-origin:0 0;color:#a4a4a4;">F9</div>
<div class="btn" style="top:256px"></div>
<div style="position:absolute;white-space:nowrap;top:259px;font-size:14px;line-height:16px;left:1436.5px;transform:scaleX(0.93);transform-origin:0 0;color:#a4a4a4;">F10</div>
<div class="btn" style="top:309px"></div>
<div style="position:absolute;white-space:nowrap;top:312px;font-size:14px;line-height:16px;left:1436.5px;transform:scaleX(0.93);transform-origin:0 0;color:#a4a4a4;-webkit-text-stroke:0.6px #a4a4a4;">B</div>
<div style="position:absolute;left:1437px;top:326px;width:9px;height:1px;background:#a4a4a4"></div>
<div style="position:absolute;left:1437px;top:328px;width:9px;height:1px;background:#a4a4a4"></div>
<div style="position:absolute;white-space:nowrap;top:312px;font-size:14px;line-height:16px;left:1446px;font-weight:bold;transform:scaleX(0.93);transform-origin:0 0;color:#a4a4a4;">:</div>
<div style="position:absolute;white-space:nowrap;top:312px;font-size:14px;line-height:16px;left:1451px;transform:scaleX(0.905);transform-origin:0 0;color:#a4a4a4;">Basis of Values</div>
<div class="btn" style="top:337px"></div>
<div style="position:absolute;white-space:nowrap;top:340px;font-size:14px;line-height:16px;left:1436.5px;transform:scaleX(0.93);transform-origin:0 0;color:#5a93c6;-webkit-text-stroke:0.6px #5a93c6;">H</div>
<div style="position:absolute;left:1437px;top:354px;width:9px;height:1px;background:#5a93c6"></div>
<div style="position:absolute;left:1437px;top:356px;width:9px;height:1px;background:#5a93c6"></div>
<div style="position:absolute;white-space:nowrap;top:340px;font-size:14px;line-height:16px;left:1446.5px;font-weight:bold;transform:scaleX(0.93);transform-origin:0 0;color:#8fa3b3;">:</div>
<div style="position:absolute;white-space:nowrap;top:340px;font-size:14px;line-height:16px;left:1451.5px;transform:scaleX(0.905);transform-origin:0 0;color:#000;">Change View</div>
<div class="btn" style="top:365px"></div>
<div style="position:absolute;white-space:nowrap;top:368px;font-size:14px;line-height:16px;left:1436.5px;transform:scaleX(0.93);transform-origin:0 0;color:#5a93c6;-webkit-text-stroke:0.6px #5a93c6;">J</div>
<div style="position:absolute;left:1437px;top:382px;width:7px;height:1px;background:#5a93c6"></div>
<div style="position:absolute;left:1437px;top:384px;width:7px;height:1px;background:#5a93c6"></div>
<div style="position:absolute;white-space:nowrap;top:368px;font-size:14px;line-height:16px;left:1444.5px;font-weight:bold;transform:scaleX(0.93);transform-origin:0 0;color:#8fa3b3;">:</div>
<div style="position:absolute;white-space:nowrap;top:368px;font-size:14px;line-height:16px;left:1449.5px;transform:scaleX(0.905);transform-origin:0 0;color:#000;">Exception Reports</div>
<div class="btn" style="top:419px"></div>
<div style="position:absolute;white-space:nowrap;top:422px;font-size:14px;line-height:16px;left:1436.8px;font-weight:bold;transform:scaleX(0.87);transform-origin:0 0;color:#5a93c6;">F4</div>
<div style="position:absolute;white-space:nowrap;top:422px;font-size:14px;line-height:16px;left:1451.8px;font-weight:bold;transform:scaleX(0.9);transform-origin:0 0;color:#8fa3b3;">:</div>
<div style="position:absolute;white-space:nowrap;top:422px;font-size:14px;line-height:16px;left:1458.0px;transform:scaleX(0.905);transform-origin:0 0;">Print Invoice</div>
<div class="btn" style="top:447px"></div>
<div style="position:absolute;white-space:nowrap;top:450px;font-size:14px;line-height:16px;left:1436.8px;font-weight:bold;transform:scaleX(0.87);transform-origin:0 0;color:#5a93c6;">F11</div>
<div style="position:absolute;white-space:nowrap;top:450px;font-size:14px;line-height:16px;left:1458.9px;font-weight:bold;transform:scaleX(0.9);transform-origin:0 0;color:#8fa3b3;">:</div>
<div style="position:absolute;white-space:nowrap;top:450px;font-size:14px;line-height:16px;left:1465.0px;transform:scaleX(0.905);transform-origin:0 0;">Party Name</div>
<div class="btn" style="top:768px"></div>
<div style="position:absolute;white-space:nowrap;top:771px;font-size:14px;line-height:16px;left:1436.8px;font-weight:bold;transform:scaleX(0.87);transform-origin:0 0;color:#5a93c6;">F12</div>
<div style="position:absolute;white-space:nowrap;top:771px;font-size:14px;line-height:16px;left:1458.9px;font-weight:bold;transform:scaleX(0.9);transform-origin:0 0;color:#8fa3b3;">:</div>
<div style="position:absolute;white-space:nowrap;top:771px;font-size:14px;line-height:16px;left:1465.0px;transform:scaleX(0.905);transform-origin:0 0;">Configure</div>
<div style="position:absolute;left:1431px;top:415px;width:139px;height:26px;border:5px solid #e21d26"></div>
</body></html>
